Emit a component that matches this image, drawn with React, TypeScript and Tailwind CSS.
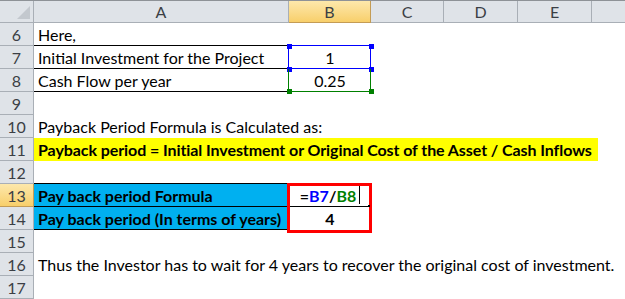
import React from 'react'

// Excel 2010 style sheet: rows 6-17, columns A-F
const gray = 'border-[#a9afb6]'
const activeHead = 'bg-gradient-to-b from-[#fde8ab] to-[#f8cf6a] border-[#c49c55]'

function ColHead({ label, w, active }: { label: string; w: string; active?: boolean }) {
    return (
        <div className={`${w} shrink-0 h-[22px] border-b border-r text-center leading-[21px] text-[#3b3f45] ${active ? activeHead : gray}`}>
            {label}
        </div>
    )
}

function Row({ n, active, children }: { n: number; active?: boolean; children?: React.ReactNode }) {
    return (
        <div className="flex h-[23px]">
            <div className={`w-[34px] shrink-0 h-[23px] border-r border-b text-center leading-[23px] text-[#3b3f45] ${active ? activeHead : `bg-[#dfe3e8] ${gray}`}`}>
                {n}
            </div>
            {children}
        </div>
    )
}

const Corner = ({ pos, color }: { pos: string; color: string }) => (
    <div className={`absolute w-[5px] h-[5px] ${pos} ${color}`} />
)

const App = () => {
    return (
        <div className="w-[625px] h-[299px] overflow-hidden bg-white text-black text-[16px] font-[Lato,sans-serif]">
            {/* column headers */}
            <div className="flex h-[23px] border-t border-[#8e9297] bg-[#dfe3e8]">
                <div className={`relative w-[34px] shrink-0 h-[22px] border-b border-r ${gray}`}>
                    <div className="absolute right-[3px] bottom-[3px] w-0 h-0 border-l-[13px] border-l-transparent border-b-[13px] border-b-[#c3c8ce]" />
                </div>
                <ColHead label="A" w="w-[255px]" />
                <ColHead label="B" w="w-[82px]" active />
                <ColHead label="C" w="w-[73px]" />
                <ColHead label="D" w="w-[74px]" />
                <ColHead label="E" w="w-[74px]" />
                <div className={`flex-1 h-[22px] border-b ${gray}`} />
            </div>

            <Row n={6}>
                <div className="w-[255px] shrink-0 h-[23px] border-b border-black pl-[4px] leading-[23px]">Here,</div>
            </Row>
            <Row n={7}>
                <div className="w-[255px] shrink-0 h-[23px] border-b border-black pl-[4px] leading-[23px] whitespace-nowrap">Initial Investment for the Project</div>
                <div className="relative w-[82px] shrink-0 h-[23px] text-center leading-[23px]">
                    1
                    <div className="absolute -left-px -top-px w-[83px] h-[24px] border border-[#0000ff]" />
                    <Corner pos="-left-[2px] -top-[2px]" color="bg-[#0000ff]" />
                    <Corner pos="-right-[3px] -top-[2px]" color="bg-[#0000ff]" />
                    <Corner pos="-left-[2px] -bottom-[3px]" color="bg-[#0000ff]" />
                    <Corner pos="-right-[3px] -bottom-[3px]" color="bg-[#0000ff]" />
                </div>
            </Row>
            <Row n={8}>
                <div className="w-[255px] shrink-0 h-[23px] border-b border-black pl-[4px] leading-[23px] whitespace-nowrap">Cash Flow per year</div>
                <div className="relative w-[82px] shrink-0 h-[23px] text-center leading-[23px]">
                    0.25
                    <div className="absolute -left-px top-0 w-[83px] h-[23px] border-x border-b border-[#008000]" />
                    <Corner pos="-left-[2px] -bottom-[2px]" color="bg-[#008000]" />
                    <Corner pos="-right-[3px] -bottom-[2px]" color="bg-[#008000]" />
                </div>
            </Row>
            <Row n={9} />
            <Row n={10}>
                <div className="pl-[4px] leading-[23px] whitespace-nowrap">Payback Period Formula is Calculated as:</div>
            </Row>
            <Row n={11}>
                <div className="w-[564px] shrink-0 h-[23px] bg-[#ffff00] pl-[4px] leading-[23px] font-bold tracking-[-0.08px] whitespace-nowrap">
                    Payback period = Initial Investment or Original Cost of the Asset / Cash Inflows
                </div>
            </Row>
            <Row n={12}>
                <div className="w-[255px] shrink-0 h-[23px] border-b border-black" />
            </Row>
            <Row n={13} active>
                <div className="w-[255px] shrink-0 h-[23px] bg-[#00b0f0] border-b border-black pl-[4px] leading-[23px] font-bold whitespace-nowrap">Pay back period Formula</div>
                <div className="relative w-[82px] shrink-0 h-[23px] border-b border-black flex items-center justify-center font-bold">
                    <span className="leading-[23px]">=<span className="text-[#0000ff]">B7</span>/<span className="text-[#008000]">B8</span></span>
                    <span className="inline-block w-px h-[18px] bg-black ml-[3px]" />
                    <div className="absolute -left-[2px] -top-px w-[85px] h-[50px] border-[3px] border-[#ff0000]" />
                    <div className="absolute right-[1px] -bottom-px w-[2px] h-[2px] bg-black" />
                </div>
            </Row>
            <Row n={14}>
                <div className="w-[255px] shrink-0 h-[23px] bg-[#00b0f0] border-b border-black pl-[4px] leading-[23px] font-bold whitespace-nowrap">Pay back period (In terms of years)</div>
                <div className="w-[82px] shrink-0 h-[23px] text-center leading-[23px] font-bold">4</div>
            </Row>
            <Row n={15} />
            <Row n={16}>
                <div className="pl-[4px] leading-[23px] whitespace-nowrap">
                    Thus the Investor has to wait for 4 years to recover the original cost of investment.
                </div>
            </Row>
            <Row n={17} />
        </div>
    )
}

export default App
